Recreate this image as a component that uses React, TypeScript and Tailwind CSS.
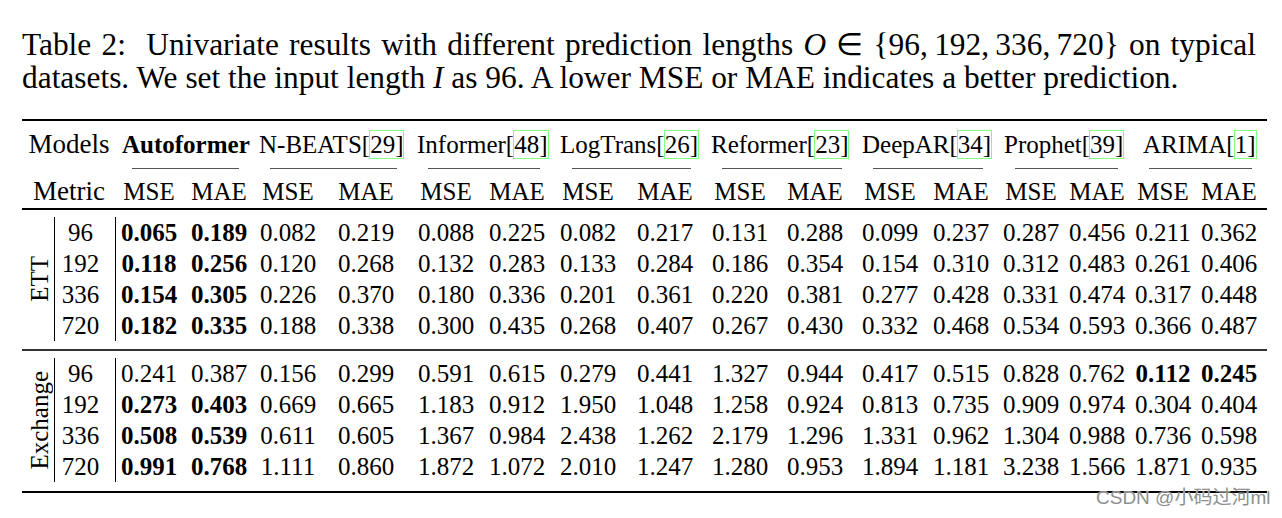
const cols =
  "grid grid-cols-[33px_61px_75px_69px_78px_80px_71px_71px_77px_75px_75px_75px_71px_70px_66px_66px_66px_66px]";

type Group = { name: string; cite?: string; bold?: boolean; label: string; rule: string };

const groups: Group[] = [
  { name: "Autoformer", bold: true, label: "pl-[6px]", rule: "ml-[16px] mr-[21px]" },
  { name: "N-BEATS", cite: "29", label: "ml-[-1px]", rule: "ml-[10px] mr-[21px]" },
  { name: "Informer", cite: "48", label: "ml-[-1px]", rule: "ml-[10px] mr-[20px]" },
  { name: "LogTrans", cite: "26", label: "pl-0", rule: "ml-[12px] mr-[21px]" },
  { name: "Reformer", cite: "23", label: "ml-[-1px]", rule: "ml-[10px] mr-[20px]" },
  { name: "DeepAR", cite: "34", label: "pl-0", rule: "ml-[11px] mr-[20px]" },
  { name: "Prophet", cite: "39", label: "pl-[1px]", rule: "ml-[12px] mr-[17px]" },
  { name: "ARIMA", cite: "1", label: "pl-[8px]", rule: "ml-[14px] mr-[15px]" },
];

// "*" marks a bold (best) value
const ett: [string, string[]][] = [
  ["96", ["*0.065", "*0.189", "0.082", "0.219", "0.088", "0.225", "0.082", "0.217", "0.131", "0.288", "0.099", "0.237", "0.287", "0.456", "0.211", "0.362"]],
  ["192", ["*0.118", "*0.256", "0.120", "0.268", "0.132", "0.283", "0.133", "0.284", "0.186", "0.354", "0.154", "0.310", "0.312", "0.483", "0.261", "0.406"]],
  ["336", ["*0.154", "*0.305", "0.226", "0.370", "0.180", "0.336", "0.201", "0.361", "0.220", "0.381", "0.277", "0.428", "0.331", "0.474", "0.317", "0.448"]],
  ["720", ["*0.182", "*0.335", "0.188", "0.338", "0.300", "0.435", "0.268", "0.407", "0.267", "0.430", "0.332", "0.468", "0.534", "0.593", "0.366", "0.487"]],
];

const exchange: [string, string[]][] = [
  ["96", ["0.241", "0.387", "0.156", "0.299", "0.591", "0.615", "0.279", "0.441", "1.327", "0.944", "0.417", "0.515", "0.828", "0.762", "*0.112", "*0.245"]],
  ["192", ["*0.273", "*0.403", "0.669", "0.665", "1.183", "0.912", "1.950", "1.048", "1.258", "0.924", "0.813", "0.735", "0.909", "0.974", "0.304", "0.404"]],
  ["336", ["*0.508", "*0.539", "0.611", "0.605", "1.367", "0.984", "2.438", "1.262", "2.179", "1.296", "1.331", "0.962", "1.304", "0.988", "0.736", "0.598"]],
  ["720", ["*0.991", "*0.768", "1.111", "0.860", "1.872", "1.072", "2.010", "1.247", "1.280", "0.953", "1.894", "1.181", "3.238", "1.566", "1.871", "0.935"]],
];

function Cell({ children, first }: { children: React.ReactNode; first?: boolean }) {
  return (
    <div className={first ? "pl-[5px]" : ""}>
      <span className="inline-block w-[56px] text-center whitespace-nowrap">{children}</span>
    </div>
  );
}

function Block({ label, rows }: { label: string; rows: [string, string[]][] }) {
  return (
    <div className={`${cols} grid-rows-[31px_31px_31px_31px] leading-[31px]`}>
      <div className="row-span-4 col-start-1 row-start-1 border-r border-black flex items-center justify-center">
        <span className="[writing-mode:vertical-rl] rotate-180 leading-none pr-[3px]">{label}</span>
      </div>
      {rows.map(([len, vals], r) => (
        <div key={len} className="contents">
          <div
            className="col-start-2 border-r border-black text-center pr-[9px]"
            style={{ gridRowStart: r + 1 }}
          >
            {len}
          </div>
          {vals.map((v, i) => (
            <Cell key={i} first={i === 0}>
              {v.startsWith("*") ? <b>{v.slice(1)}</b> : v}
            </Cell>
          ))}
        </div>
      ))}
    </div>
  );
}

export default function App() {
  return (
    <div className="relative w-[1282px] h-[518px] overflow-hidden bg-white text-black font-['Liberation_Serif','Times_New_Roman',serif]">
      <div className="pt-[28px] pl-[22px] w-[1256px] text-[31.4px] leading-[33px]">
        <span className="block text-justify [text-align-last:justify] whitespace-nowrap">
          Table 2: &nbsp;Univariate results with different prediction lengths <i>O</i> ∈ &#123;96,&thinsp;192,&thinsp;336,&thinsp;720&#125; on typical
        </span>
        <span className="block whitespace-nowrap">
          datasets. We set the input length <i>I</i> as 96. A lower MSE or MAE indicates a better prediction.
        </span>
      </div>

      <div className="ml-[22px] w-[1245px] mt-[25px] text-[25px]">
        <div className="h-[2px] bg-black" />

        <div className={`${cols} mt-[8px] h-[31px] leading-[31px]`}>
          <div className="col-span-2 text-center text-[27px]">Models</div>
          {groups.map((g) => (
            <div key={g.name} className={`col-span-2 whitespace-nowrap ${g.label}`}>
              {g.bold ? (
                <b>{g.name}</b>
              ) : (
                <>
                  {g.name}[<span className="outline outline-1 outline-[#80ff80]">{g.cite}]</span>
                </>
              )}
            </div>
          ))}
        </div>

        <div className={`${cols} h-[16px]`}>
          <div className="col-span-2" />
          {groups.map((g) => (
            <div key={g.name} className="col-span-2 flex items-center">
              <div className={`h-px flex-1 bg-[#555] ${g.rule}`} />
            </div>
          ))}
        </div>

        <div className={`${cols} h-[31px] leading-[31px]`}>
          <div className="col-span-2 text-center text-[27px]">Metric</div>
          {groups.map((g, i) => (
            <div key={g.name} className="contents">
              <Cell first={i === 0}>MSE</Cell>
              <Cell>MAE</Cell>
            </div>
          ))}
        </div>

        <div className="h-[2px] bg-black mt-px" />
        <div className="mt-[7px]">
          <Block label="ETT" rows={ett} />
        </div>
        <div className="h-[2px] bg-[#333] mt-[8px]" />
        <div className="mt-[7px]">
          <Block label="Exchange" rows={exchange} />
        </div>
        <div className="h-[2px] bg-black mt-[9px]" />
      </div>

      <div className="absolute left-[1096px] top-[488px] text-[19px] leading-none text-[#8f8f8f] font-['Liberation_Sans','Noto_Sans_CJK_SC',sans-serif] whitespace-nowrap [text-shadow:0_0_1px_#fff]">
        CSDN @小码过河ml
      </div>
    </div>
  );
}
